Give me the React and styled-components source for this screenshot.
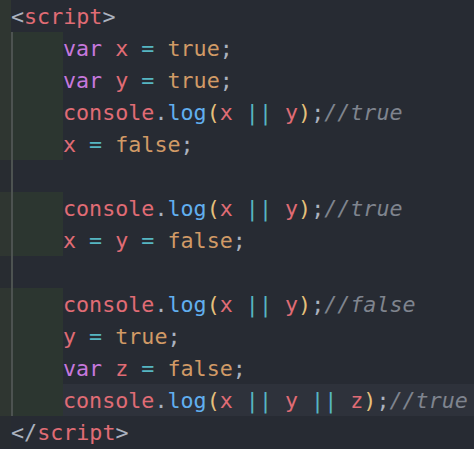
import React from "react";
import styled, { createGlobalStyle } from "styled-components";

const GlobalStyle = createGlobalStyle`
  html, body {
    margin: 0;
    padding: 0;
    background: #272b33;
  }
`;

const Editor = styled.div`
  width: 474px;
  height: 449px;
  overflow: hidden;
  background: #272b33;
  font-family: "DejaVu Sans Mono", "Liberation Mono", monospace;
  font-size: 21.7px;
  display: flex;
  flex-direction: column;
`;

const Line = styled.div`
  display: flex;
  height: 32px;
  align-items: stretch;
  flex-shrink: 0;
`;

const Strip = styled.div`
  width: 11px;
  flex-shrink: 0;
  background: ${(p) => (p.$lit ? "#2f3631" : "#282c31")};
`;

const Indent = styled.div`
  width: 50px;
  flex-shrink: 0;
  border-left: 2px solid #4d5351;
  background: ${(p) => (p.$lit ? "#2c3630" : "transparent")};
`;

const Code = styled.div`
  flex: 1;
  display: flex;
  align-items: center;
  white-space: pre;
  color: #abb2bf;
  background: ${(p) => (p.$current ? "#2e323b" : "transparent")};
`;

const T = styled.span`
  color: ${(p) => p.$c};
  font-style: ${(p) => (p.$i ? "italic" : "normal")};
`;

const C = {
  tag: "#e06c75",
  punc: "#abb2bf",
  kw: "#c678dd",
  id: "#e06c75",
  op: "#56b6c2",
  lit: "#d19a66",
  fn: "#61afef",
  paren: "#e5c07b",
  com: "#7f848e",
};

const tok = (text, c, i) => ({ text, c, i });

const log = (args, comment) => [
  tok("console", C.id),
  tok(".", C.punc),
  tok("log", C.fn),
  tok("(", C.paren),
  ...args,
  tok(")", C.paren),
  tok(";", C.punc),
  tok("//" + comment, C.com, true),
];

const xy = [tok("x", C.id), tok(" || ", C.op), tok("y", C.id)];

const lines = [
  { top: true, toks: [tok("<", C.punc), tok("script", C.tag), tok(">", C.punc)] },
  { toks: [tok("var ", C.kw), tok("x", C.id), tok(" = ", C.op), tok("true", C.lit), tok(";", C.punc)] },
  { toks: [tok("var ", C.kw), tok("y", C.id), tok(" = ", C.op), tok("true", C.lit), tok(";", C.punc)] },
  { toks: log(xy, "true") },
  { toks: [tok("x", C.id), tok(" = ", C.op), tok("false", C.lit), tok(";", C.punc)] },
  { blank: true, toks: [] },
  { toks: log(xy, "true") },
  { toks: [tok("x", C.id), tok(" = ", C.op), tok("y", C.id), tok(" = ", C.op), tok("false", C.lit), tok(";", C.punc)] },
  { blank: true, toks: [] },
  { toks: log(xy, "false") },
  { toks: [tok("y", C.id), tok(" = ", C.op), tok("true", C.lit), tok(";", C.punc)] },
  { toks: [tok("var ", C.kw), tok("z", C.id), tok(" = ", C.op), tok("false", C.lit), tok(";", C.punc)] },
  {
    current: true,
    toks: log([...xy, tok(" || ", C.op), tok("z", C.id)], "true"),
  },
  { top: true, end: true, toks: [tok("</", C.punc), tok("script", C.tag), tok(">", C.punc)] },
];

export default function App() {
  return (
    <>
      <GlobalStyle />
      <Editor>
        {lines.map((l, n) => (
          <Line key={n}>
            <Strip $lit={!l.blank && !l.end} />
            {!l.top && <Indent $lit={!l.blank} />}
            <Code $current={l.current}>
              {l.toks.map((t, k) => (
                <T key={k} $c={t.c} $i={t.i}>
                  {t.text}
                </T>
              ))}
            </Code>
          </Line>
        ))}
      </Editor>
    </>
  );
}
